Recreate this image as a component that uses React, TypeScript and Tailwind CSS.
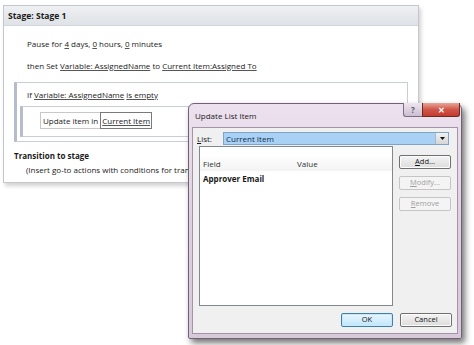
import React from "react";

const U = ({ children }: { children: React.ReactNode }) => (
  <span className="underline underline-offset-[1px] decoration-[#555]">{children}</span>
);

function WinButton({
  label,
  accel,
  disabled,
  isDefault,
}: {
  label: string;
  accel?: number;
  disabled?: boolean;
  isDefault?: boolean;
}) {
  const i = accel ?? -1;
  const text =
    i >= 0 ? (
      <>
        {label.slice(0, i)}
        <span className="underline">{label[i]}</span>
        {label.slice(i + 1)}
      </>
    ) : (
      label
    );
  const base =
    "w-[52px] h-[14px] rounded-[2px] flex items-center justify-center leading-none text-[7.5px]";
  if (disabled)
    return (
      <div className={`${base} border border-[#c5c5c5] bg-[#f4f4f4] text-[#a0a0a0]`}>{text}</div>
    );
  if (isDefault)
    return (
      <div
        className={`${base} border border-[#3c7fb1] bg-gradient-to-b from-[#eaf6fd] to-[#bee6fd] text-[#111] shadow-[inset_0_0_0_1px_#c8e8f8]`}
      >
        {text}
      </div>
    );
  return (
    <div
      className={`${base} border border-[#707070] bg-gradient-to-b from-[#f4f4f4] to-[#dcdcdc] text-[#111] shadow-[inset_0_0_0_1px_#fcfcfc]`}
    >
      {text}
    </div>
  );
}

export default function App() {
  return (
    <div className="relative w-[474px] h-[345px] bg-white overflow-hidden font-['Open_Sans',sans-serif] text-[8px] leading-[11px] text-[#1a1a1a]">
      {/* Background workflow stage panel */}
      <div className="ml-[3px] mt-[5px] w-[416px] h-[178px] border border-[#c4c7cc] bg-white shadow-[2px_3px_4px_rgba(0,0,0,0.18)]">
        <div className="h-[20px] bg-gradient-to-b from-[#eef0f2] to-[#dfe2e6] border-b border-[#d2d5da] flex items-center pl-[4px] font-bold text-[8.5px] text-[#1a1a1a]">
          Stage: Stage 1
        </div>
        <div className="pt-[6px]">
          <div className="h-[22px] flex items-center pl-[23px]">
            Pause for&nbsp;<U>4</U>&nbsp;days,&nbsp;<U>0</U>&nbsp;hours,&nbsp;<U>0</U>&nbsp;minutes
          </div>
          <div className="h-[22px] flex items-center pl-[23px]">
            then Set&nbsp;<U>Variable: AssignedName</U>&nbsp;to&nbsp;<U>Current Item:Assigned To</U>
          </div>
          <div className="ml-[10px] mt-[6px] w-[394px] h-[60px] border border-[#c9cdd6] border-l-[3px] border-l-[#b6bccb] flex flex-col">
            <div className="h-[22px] flex items-center pl-[10px]">
              If&nbsp;<U>Variable: AssignedName</U>&nbsp;<U>is empty</U>
            </div>
            <div className="ml-[3px] mt-[1px] w-[381px] h-[31px] border border-[#c9cdd6] border-l-[3px] border-l-[#b6bccb] pt-[5px] pl-[17px] flex">
              <div className="h-[17px] flex items-stretch">
                <div className="border border-[#c8c8c8] border-r-0 flex items-center px-[2px]">Update item in</div>
                <div className="border border-[#7a7a7a] flex items-center px-[1px]">
                  <U>Current Item</U>
                </div>
              </div>
            </div>
          </div>
          <div className="h-[14px] mt-[6px] flex items-center pl-[10px] font-bold text-[#1a1a1a]">
            Transition to stage
          </div>
          <div className="h-[14px] w-[184px] overflow-hidden flex items-center pl-[22px] whitespace-nowrap">
            (Insert go-to actions with conditions for transitioning to the stage)
          </div>
        </div>
      </div>

      {/* Update List Item dialog */}
      <div className="absolute left-[188px] top-[103px] w-[274px] h-[236px] rounded-t-[6px] rounded-b-[2px] border border-[#6f6273] bg-gradient-to-b from-[#ede1ef] via-[#ddd0e0] to-[#d7c8da] shadow-[3px_4px_6px_rgba(0,0,0,0.55)] flex flex-col px-[3px] pb-[4px]">
        <div className="h-[23px] flex items-center pl-[3px] text-[8px] text-[#1a1a1a]">Update List Item</div>
        {/* title buttons */}
        <div className="absolute top-[-1px] right-[1px] flex">
          <div className="w-[19px] h-[14px] rounded-bl-[3px] border border-[#7d6f80] border-t-0 border-r-0 bg-gradient-to-b from-[#efe6f0] to-[#cdbdd1] flex items-center justify-center text-[8px] font-bold text-[#5c5c5c] leading-none">
            ?
          </div>
          <div className="w-[38px] h-[14px] rounded-br-[3px] border border-[#6b2a22] border-t-0 bg-gradient-to-b from-[#e6a597] via-[#d0564a] to-[#c23b2e] flex items-center justify-center text-[8px] font-bold text-white leading-none">
            ✕
          </div>
        </div>
        <div className="flex-1 border border-[#a394a6] bg-[#f0f0f0] flex flex-col">
          <div className="flex items-center mt-[4px] h-[13px]">
            <span className="w-[30px] pl-[4px]">
              <span className="underline">L</span>ist:
            </span>
            <div className="w-[226px] h-[13px] border border-[#7ea4c8] bg-[#a9d1f5] flex items-center">
              <span className="flex-1 pl-[2px] text-[#0d2a4a]">Current Item</span>
              <div className="w-[13px] h-[11px] border-l border-[#a7b8c9] bg-gradient-to-b from-[#f2f2f2] to-[#d6d6d6] flex items-center justify-center">
                <svg width="5" height="3" viewBox="0 0 5 3">
                  <path d="M0 0 H5 L2.5 3 Z" fill="#111" />
                </svg>
              </div>
            </div>
          </div>
          <div className="flex mt-[1px]">
            <div className="ml-[6px] w-[194px] h-[160px] border border-[#828790] bg-white flex flex-col">
              <div className="h-[8px] shrink-0 bg-white" />
              <div className="h-[16px] shrink-0 flex items-center text-[#333] bg-gradient-to-b from-[#ffffff] to-[#f3f3f3]">
                <span className="w-[97px] pl-[3px]">Field</span>
                <span>Value</span>
              </div>
              <div className="h-[14px] shrink-0 flex items-center pl-[3px] font-bold text-[#1a1a1a]">Approver Email</div>
            </div>
            <div className="ml-[6px] mt-[9px] flex flex-col gap-[7px]">
              <WinButton label="Add..." accel={0} />
              <WinButton label="Modify..." accel={0} disabled />
              <WinButton label="Remove" accel={0} disabled />
            </div>
          </div>
          <div className="flex justify-end gap-[7px] mt-[7px] pr-[5px]">
            <WinButton label="OK" isDefault />
            <WinButton label="Cancel" />
          </div>
        </div>
      </div>
    </div>
  );
}
